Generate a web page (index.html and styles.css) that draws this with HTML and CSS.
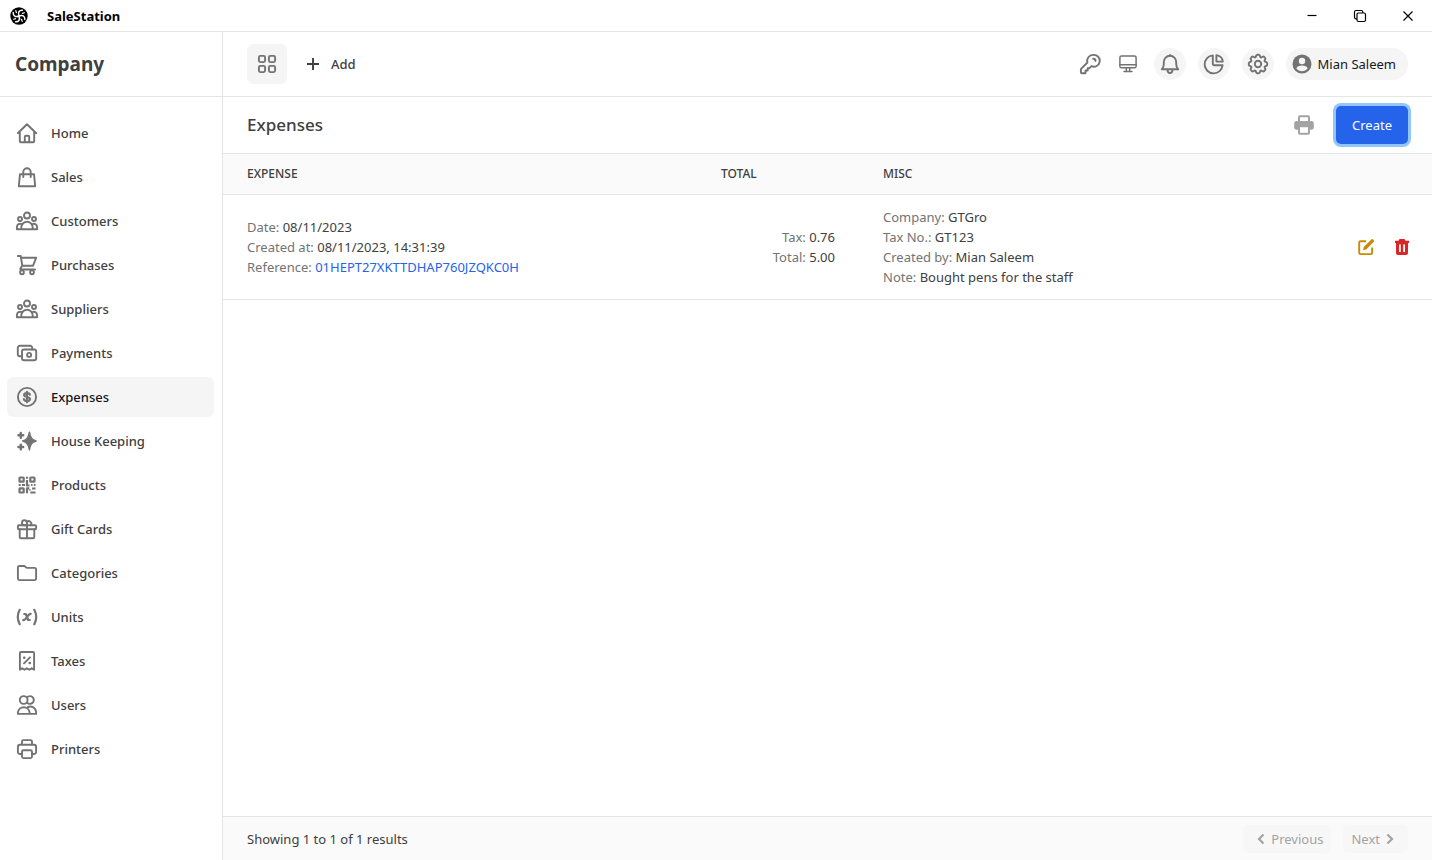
FILE: index.html
```html
<!DOCTYPE html>
<html lang="en">
  <head>
    <meta charset="UTF-8" />
    <meta name="viewport" content="width=device-width, initial-scale=1.0" />
    <title>SaleStation</title>
    <link rel="stylesheet" href="styles.css">
  </head>
  <body>
    <!-- icons used more than once -->
    <svg class="sprite" aria-hidden="true">
      <symbol id="people" viewBox="0 0 24 24">
        <circle cx="12" cy="6.500" r="3" />
        <circle cx="5" cy="10" r="2" />
        <circle cx="19" cy="10" r="2" />
        <path d="M6.300 20.300v-1.800a5.700 5.700 0 0 1 11.400 0v1.800zM6.300 20.300H1.900v-2.400a3.200 3.200 0 0 1 5-2.600M17.700 20.300h4.400v-2.400a3.200 3.200 0 0 0-5-2.600" />
      </symbol>
    </svg>

    <div class="titlebar">
      <svg class="logo" viewBox="0 0 18 18">
        <circle cx="9" cy="9" r="8.700" fill="#000" />
        <g fill="none" stroke="#fff" stroke-width="1.500" stroke-linecap="round">
          <path d="M12.400 3.200C9.200 3 7.600 5.400 9 9s-.2 6-3.400 5.800M14.800 12.400C15 9.200 12.600 7.600 9 9s-6-.2-5.800-3.400" />
          <path d="M5.800 3.600l.6 2M14.400 5.800l-2 .6M12.200 14.400l-.6-2M3.600 12.200l2-.6" stroke-width="1.200" />
        </g>
      </svg>
      <span class="app-name">SaleStation</span>
      <div class="window-btns">
        <button aria-label="Minimize"><svg viewBox="0 0 16 16"><path d="M3.500 7.500h9" /></svg></button>
        <button aria-label="Restore"><svg viewBox="0 0 16 16"><rect x="5" y="5" width="8.500" height="8.500" rx="1.500" /><path d="M5 10.800H4A1.500 1.500 0 0 1 2.500 9.300V4A1.500 1.500 0 0 1 4 2.500h5.300A1.500 1.500 0 0 1 10.800 4v1" /></svg></button>
        <button aria-label="Close"><svg viewBox="0 0 16 16"><path d="M3.500 3.500l9 9M12.500 3.500l-9 9" /></svg></button>
      </div>
    </div>

    <div class="app">
      <aside class="sidebar">
        <div class="brand">Company</div>
        <nav class="menu">
          <a href="#"><svg class="icon" viewBox="0 0 24 24"><path d="M2.800 12.200L12 3.200l9.200 9M4.800 10.800v9.400a1 1 0 0 0 1 1h12.400a1 1 0 0 0 1-1v-9.400M9.800 21v-5.200a1 1 0 0 1 1-1h2.400a1 1 0 0 1 1 1V21" /></svg>Home</a>
          <a href="#"><svg class="icon" viewBox="0 0 24 24"><path d="M5 9.200h14l1.200 12H3.800zM8.300 12V7a3.700 3.700 0 0 1 7.400 0v5" /></svg>Sales</a>
          <a href="#"><svg class="icon"><use href="#people" /></svg>Customers</a>
          <a href="#"><svg class="icon" viewBox="0 0 24 24"><path d="M2.800 3h2.900l1.600 9.800-1.900 2.600a.7.7 0 0 0 .6 1.100H20M6 4.700h15.200l-3.200 8.100H7.300" /><circle cx="7" cy="19.300" r="1.900" /><circle cx="17" cy="19.300" r="1.900" /></svg>Purchases</a>
          <a href="#"><svg class="icon"><use href="#people" /></svg>Suppliers</a>
          <a href="#"><svg class="icon" viewBox="0 0 24 24"><rect x="7" y="8.500" width="14.200" height="10.800" rx="2" /><circle cx="14.100" cy="13.900" r="2" /><path d="M7 15.300H4.800a2 2 0 0 1-2-2V6.800a2 2 0 0 1 2-2h10.400a2 2 0 0 1 2 2v1.700" /></svg>Payments</a>
          <a href="#" class="active"><svg class="icon" viewBox="0 0 24 24"><circle cx="12" cy="12" r="9.100" /><path stroke-width="2.200" d="M14.900 9.700c-.3-1.100-1.400-1.600-2.900-1.600-1.700 0-2.900.6-2.900 1.900 0 2.700 5.900 1.200 5.900 4 0 1.300-1.200 2-3 2-1.700 0-2.900-.7-3.100-1.900M12 6.800v10.400" /></svg>Expenses</a>
          <a href="#"><svg class="icon" viewBox="0 0 24 24"><path fill="currentColor" stroke-width="1.500" d="M14.400 3.200c.9 5.500 2.400 7.800 6.700 8.800-4.300 1-5.800 3.300-6.700 8.800-.9-5.500-2.400-7.800-6.700-8.800 4.300-1 5.800-3.300 6.700-8.800z" /><path stroke-width="2.400" d="M5.800 3.900v4.800M3.400 6.300h4.800M5.800 15.600v4.800M3.400 18h4.800" /></svg>House Keeping</a>
          <a href="#"><svg class="icon" viewBox="0 0 24 24"><g stroke-width="2.200"><rect x="4.500" y="4.500" width="4.200" height="4.200" rx=".5" /><rect x="15.300" y="4.500" width="4.200" height="4.200" rx=".5" /><rect x="4.500" y="15.300" width="4.200" height="4.200" rx=".5" /><path stroke-linecap="butt" d="M12 3.700v2M12 7v5.500h2.500M3.700 12h2M7 12h3M16 12h1.500M18.800 12h1.700M12 20.300v-5h2.300M14.500 17h1M15.300 19.500h5.200M17 15.500h3.500" /></g></svg>Products</a>
          <a href="#"><svg class="icon" viewBox="0 0 24 24"><rect x="2.900" y="8.300" width="18.200" height="4" rx="1" /><path d="M4.700 12.300v7.600a1.300 1.300 0 0 0 1.300 1.300h12a1.300 1.300 0 0 0 1.300-1.300v-7.600M12 8.300v13M12 8.300H9.300a2.500 2.500 0 1 1 2.700-2.500zM12 8.300V5a2.200 2.200 0 1 1 3.600 3.300" /></svg>Gift Cards</a>
          <a href="#"><svg class="icon" viewBox="0 0 24 24"><path d="M2.900 6.500a1.500 1.500 0 0 1 1.500-1.500h5l2.600 1.900h7.600a1.500 1.500 0 0 1 1.500 1.500v9.200a1.500 1.500 0 0 1-1.500 1.500H4.400a1.500 1.500 0 0 1-1.500-1.500z" /></svg>Categories</a>
          <a href="#"><svg class="icon" viewBox="0 0 24 24"><path stroke-width="2.200" d="M4.700 4.800c-2.300 4.300-2.300 10.100 0 14.400M19.300 4.800c2.300 4.300 2.300 10.100 0 14.400M9.300 9h1.400l2.600 6h1.500M15.700 8.800c-1.700 0-2.500 1.200-3.700 3.200s-2 3.200-3.800 3.200" /></svg>Units</a>
          <a href="#"><svg class="icon" viewBox="0 0 24 24"><path d="M4.900 20.800V4.200a1.200 1.200 0 0 1 1.200-1.200h11.800a1.200 1.200 0 0 1 1.200 1.200v16.600l-2.400-1.500-2.400 1.500-2.400-1.500-2.400 1.500-2.400-1.500zM9 14.300l6-6" /><path stroke-width="2.500" d="M9.200 8.700h.1M14.700 13.900h.1" /></svg>Taxes</a>
          <a href="#"><svg class="icon" viewBox="0 0 24 24"><circle cx="8.700" cy="7" r="3.900" /><path d="M12 4.400a3.900 3.900 0 1 1 0 5.200M2.900 20.900v-1.500a5.900 5.900 0 0 1 11.700 0v1.500zM14.600 20.900h6.500v-1.500a5.900 5.900 0 0 0-8.100-5.400" /></svg>Users</a>
          <a href="#"><svg class="icon" viewBox="0 0 24 24"><path d="M7 7.800V4.600a1.500 1.500 0 0 1 1.500-1.500h7A1.500 1.500 0 0 1 17 4.600v3.200M7 17H5a2.100 2.100 0 0 1-2.100-2.100V10A2.200 2.200 0 0 1 5 7.800h14a2.200 2.200 0 0 1 2.100 2.200v4.900A2.100 2.100 0 0 1 19 17h-2" /><rect x="7" y="13.200" width="10" height="7.900" rx="1.500" /></svg>Printers</a>
        </nav>
      </aside>

      <main class="main">
        <header class="topbar">
          <button class="grid-btn" aria-label="Dashboard">
            <svg class="icon" viewBox="0 0 24 24"><rect x="3.900" y="3.900" width="6.200" height="6.200" rx="1.500" /><rect x="13.900" y="3.900" width="6.200" height="6.200" rx="1.500" /><rect x="3.900" y="13.900" width="6.200" height="6.200" rx="1.500" /><rect x="13.900" y="13.900" width="6.200" height="6.200" rx="1.500" /></svg>
          </button>
          <button class="add-btn">
            <svg class="icon" viewBox="0 0 24 24"><path d="M12 6v12M6 12h12" stroke-linecap="butt" /></svg>Add
          </button>
          <div class="top-actions">
            <div class="plain-actions">
              <button class="plain-btn" aria-label="License"><svg class="icon" viewBox="0 0 24 24"><path d="M15.200 2.900a5.900 5.900 0 0 0-5.800 7.600l-6.100 6.200a1.400 1.400 0 0 0-.4 1v2.500a1 1 0 0 0 1 1h3.600v-2.700h2.200v-2.200h1.500l2.200-2.200a5.900 5.900 0 1 0 1.800-11.200zM15.200 6.800a2.300 2.300 0 0 1 2.300 2.300" /></svg></button>
              <button class="plain-btn" aria-label="Display"><svg class="icon thin" viewBox="0 0 24 24"><rect x="3.900" y="4" width="16.200" height="11.800" rx="1.600" /><path d="M4 12.800h16M10.300 16v3M13.700 16v3M8 19.400h8" /></svg></button>
            </div>
            <button class="round-btn" aria-label="Notifications"><svg class="icon" viewBox="0 0 24 24"><path d="M3.800 17.300c1.500-1.400 2-3 2-5.200V10a6.200 6.200 0 0 1 12.400 0v2.100c0 2.200.5 3.800 2 5.200zM9.500 17.500a2.500 3.500 0 0 0 5 0M12 2.900v1" /></svg></button>
            <button class="round-btn" aria-label="Reports"><svg class="icon" viewBox="0 0 24 24"><path d="M10.800 3.400a9 9 0 1 0 9.800 9.800h-8.400a1.400 1.400 0 0 1-1.400-1.400zM14.400 3.200v6.400h6.400a7 7 0 0 0-6.400-6.400z" /></svg></button>
            <button class="round-btn" aria-label="Settings"><svg class="icon" viewBox="0 0 24 24"><circle cx="12" cy="12" r="3.200" /><path d="M10.100 3.800a1.400 1.400 0 0 1 1.300-1h1.200a1.400 1.400 0 0 1 1.300 1l.4 1.300 1 .4 1.200-.7a1.400 1.400 0 0 1 1.700.2l.8.800a1.400 1.400 0 0 1 .2 1.700l-.7 1.200.4 1 1.300.4a1.400 1.400 0 0 1 1 1.300v1.200a1.400 1.400 0 0 1-1 1.300l-1.300.4-.4 1 .7 1.200a1.400 1.400 0 0 1-.2 1.700l-.8.8a1.400 1.400 0 0 1-1.700.2l-1.200-.7-1 .4-.4 1.300a1.400 1.400 0 0 1-1.300 1h-1.200a1.400 1.400 0 0 1-1.300-1l-.4-1.300-1-.4-1.200.7a1.400 1.400 0 0 1-1.700-.2l-.8-.8a1.400 1.400 0 0 1-.2-1.700l.7-1.200-.4-1-1.300-.4a1.400 1.400 0 0 1-1-1.300v-1.200a1.400 1.400 0 0 1 1-1.300l1.300-.4.4-1-.7-1.200a1.400 1.400 0 0 1 .2-1.700l.8-.8a1.400 1.400 0 0 1 1.700-.2l1.200.7 1-.4z" /></svg></button>
            <button class="user-btn">
              <svg class="icon" viewBox="0 0 24 24"><circle cx="12" cy="12" r="9.500" fill="currentColor" stroke="none" /><circle cx="12" cy="9" r="3.200" fill="#f5f5f5" stroke="none" /><path d="M6.300 16.300a6 4 0 0 1 11.400 0 7 7 0 0 1-11.400 0z" fill="#f5f5f5" stroke="none" /></svg>Mian Saleem
            </button>
          </div>
        </header>

        <div class="page-head">
          <h1>Expenses</h1>
          <button class="print-btn" aria-label="Print">
            <svg viewBox="0 0 24 24"><path fill="currentColor" fill-rule="evenodd" d="M8 2.300h8a2 2 0 0 1 2 2V8h1.500a2.300 2.300 0 0 1 2.300 2.300v4.200a2.300 2.300 0 0 1-2.300 2.300H18v2.900a2 2 0 0 1-2 2H8a2 2 0 0 1-2-2v-2.900H4.500a2.300 2.300 0 0 1-2.300-2.300v-4.200A2.300 2.300 0 0 1 4.500 8H6V4.300a2 2 0 0 1 2-2zM8 4.300V8h8V4.300zM8 14.300v5.400h8v-5.400z" /></svg>
          </button>
          <button class="create-btn">Create</button>
        </div>

        <table class="list">
          <thead>
            <tr>
              <th>Expense</th>
              <th class="col-total">Total</th>
              <th>Misc</th>
              <th class="col-actions" aria-label="Actions"></th>
            </tr>
          </thead>
          <tbody>
            <tr>
              <td>
                <div><span>Date:</span> 08/11/2023</div>
                <div><span>Created at:</span> 08/11/2023, 14:31:39</div>
                <div><span>Reference:</span> <a href="#">01HEPT27XKTTDHAP760JZQKC0H</a></div>
              </td>
              <td class="amount">
                <div><span>Tax:</span> 0.76</div>
                <div><span>Total:</span> 5.00</div>
              </td>
              <td>
                <div><span>Company:</span> GTGro</div>
                <div><span>Tax No.:</span> GT123</div>
                <div><span>Created by:</span> Mian Saleem</div>
                <div><span>Note:</span> Bought pens for the staff</div>
              </td>
              <td>
                <div class="row-btns">
                  <button class="edit" aria-label="Edit"><svg viewBox="0 0 20 20"><path d="M10 4.200H4.500a1.300 1.300 0 0 0-1.300 1.300v10.300a1.300 1.300 0 0 0 1.300 1.300h10.300a1.300 1.300 0 0 0 1.300-1.300V10.500" fill="none" stroke="currentColor" stroke-width="1.900" /><path d="M7.200 13.200l.5-3.100 7.500-7.400a1.500 1.500 0 0 1 2.200 0l.2.300a1.500 1.500 0 0 1 0 2.100l-7.400 7.500z" fill="currentColor" /></svg></button>
                  <button class="delete" aria-label="Delete"><svg viewBox="0 0 20 20"><path fill="currentColor" fill-rule="evenodd" d="M7.500 2h5l1 1.700H17v2.200h-1V16a2 2 0 0 1-2 2H6a2 2 0 0 1-2-2V5.900H3V3.700h3.500zM7 7.500V15h1.800V7.500zM11.200 7.500V15H13V7.500z" /></svg></button>
                </div>
              </td>
            </tr>
          </tbody>
        </table>

        <footer class="pager">
          <p>Showing 1 to 1 of 1 results</p>
          <button class="prev" disabled><svg viewBox="0 0 16 16"><path d="M10.500 3.500L6 8l4.500 4.500" /></svg>Previous</button>
          <button class="next" disabled>Next<svg viewBox="0 0 16 16"><path d="M5.500 3.500L10 8l-4.500 4.500" /></svg></button>
        </footer>
      </main>
    </div>
  </body>
</html>
```
FILE: styles.css
```css
* {
  padding: 0;
  margin: 0;
  box-sizing: border-box;
}
body {
  height: 100vh;
  display: flex;
  flex-direction: column;
  font-family: "Noto Sans", "Open Sans", sans-serif;
  font-size: 13px;
  line-height: 20px;
  color: #404040;
  background: #fff;
}
button {
  font: inherit;
  color: inherit;
  border: none;
  background: none;
  cursor: pointer;
}
a {
  text-decoration: none;
}
svg {
  display: block;
  flex-shrink: 0;
}
.sprite {
  width: 0;
  height: 0;
  position: absolute;
}
.icon {
  width: 24px;
  height: 24px;
  fill: none;
  stroke: currentColor;
  stroke-width: 1.9;
  stroke-linecap: round;
  stroke-linejoin: round;
  color: #737373;
}
.icon.thin {
  stroke-width: 1.5;
}

/* title bar */
.titlebar {
  height: 32px;
  display: flex;
  align-items: center;
  padding-left: 10px;
  border-bottom: 1px solid #e5e5e5;
  color: #000;
}
.logo {
  width: 18px;
  height: 18px;
}
.app-name {
  margin-left: 19px;
  font-weight: 700;
}
.window-btns {
  display: flex;
  margin-left: auto;
}
.window-btns button {
  width: 48px;
  height: 30px;
  display: grid;
  place-items: center;
}
.window-btns svg {
  width: 16px;
  height: 16px;
  fill: none;
  stroke: #000;
  stroke-width: 1.2;
}

.app {
  flex: 1;
  min-height: 0;
  display: flex;
}

/* sidebar */
.sidebar {
  width: 223px;
  flex-shrink: 0;
  border-right: 1px solid #e5e5e5;
}
.brand {
  height: 65px;
  padding: 0 15px;
  display: flex;
  align-items: center;
  border-bottom: 1px solid #e5e5e5;
  font-size: 19px;
  font-weight: 700;
}
.menu {
  display: flex;
  flex-direction: column;
  gap: 4px;
  padding: 16px 8px 16px 7px;
}
.menu a {
  height: 40px;
  display: flex;
  align-items: center;
  gap: 12px;
  padding: 0 8px;
  border-radius: 6px;
  color: #404040;
  font-weight: 500;
}
.menu a.active {
  background: #f5f5f5;
  color: #171717;
}

/* top bar */
.main {
  flex: 1;
  min-width: 0;
  display: flex;
  flex-direction: column;
}
.topbar {
  height: 65px;
  display: flex;
  align-items: center;
  padding: 0 24px;
  border-bottom: 1px solid #e5e5e5;
}
.grid-btn {
  width: 40px;
  height: 40px;
  display: grid;
  place-items: center;
  border-radius: 6px;
  background: #f5f5f5;
}
.add-btn {
  display: flex;
  align-items: center;
  gap: 6px;
  margin-left: 14px;
  font-weight: 500;
}
.add-btn .icon {
  color: #404040;
}
.top-actions {
  display: flex;
  align-items: center;
  gap: 12px;
  margin-left: auto;
}
.plain-actions {
  display: flex;
  gap: 14px;
  margin-right: 2px;
}
.round-btn {
  width: 32px;
  height: 32px;
  display: grid;
  place-items: center;
  border-radius: 50%;
  background: #f5f5f5;
}
.user-btn {
  height: 32px;
  display: flex;
  align-items: center;
  gap: 4px;
  padding: 0 12px 0 4px;
  border-radius: 16px;
  background: #f5f5f5;
  color: #171717;
}

/* page heading */
.page-head {
  height: 57px;
  display: flex;
  align-items: center;
  padding: 0 24px;
  border-bottom: 1px solid #e5e5e5;
}
.page-head h1 {
  font-size: 17px;
  font-weight: 500;
}
.print-btn {
  margin-left: auto;
  color: #a3a3a3;
}
.print-btn svg {
  width: 24px;
  height: 24px;
}
.create-btn {
  height: 38px;
  margin-left: 20px;
  padding: 0 16px;
  border-radius: 5px;
  background: #2563eb;
  color: #fff;
  box-shadow: 0 0 0 3px #93c5fd;
}

/* table */
.list {
  width: 100%;
  table-layout: fixed;
  border-collapse: separate;
  border-spacing: 0;
}
.list th {
  height: 41px;
  padding: 0 24px;
  background: #fafafa;
  border-bottom: 1px solid #e5e5e5;
  font-size: 12px;
  font-weight: 500;
  text-align: left;
  text-transform: uppercase;
}
.list td {
  padding: 12px 24px;
  border-bottom: 1px solid #e5e5e5;
  vertical-align: middle;
  white-space: nowrap;
}
.list td span {
  color: #737373;
}
.list td a {
  color: #2563eb;
}
.list .col-total {
  width: 162px;
}
.list .col-actions {
  width: 99px;
}
.list .amount {
  text-align: right;
}
.row-btns {
  display: flex;
  justify-content: flex-end;
  gap: 16px;
  margin: 0 -4px;
}
.row-btns svg {
  width: 20px;
  height: 20px;
}
.edit {
  color: #ca8a04;
}
.delete {
  color: #dc2626;
}

/* footer */
.pager {
  height: 44px;
  display: flex;
  align-items: center;
  gap: 12px;
  margin-top: auto;
  padding: 0 24px;
  border-top: 1px solid #e5e5e5;
  background: #fafafa;
}
.pager p {
  margin-right: auto;
}
.pager button {
  height: 28px;
  display: flex;
  align-items: center;
  gap: 2px;
  border-radius: 5px;
  background: #f7f7f7;
  color: #a3a3a3;
  cursor: default;
}
.pager .prev {
  padding: 0 8px 0 10px;
}
.pager .next {
  padding: 0 10px 0 8px;
}
.pager svg {
  width: 16px;
  height: 16px;
  fill: none;
  stroke: currentColor;
  stroke-width: 2.2;
}
```
